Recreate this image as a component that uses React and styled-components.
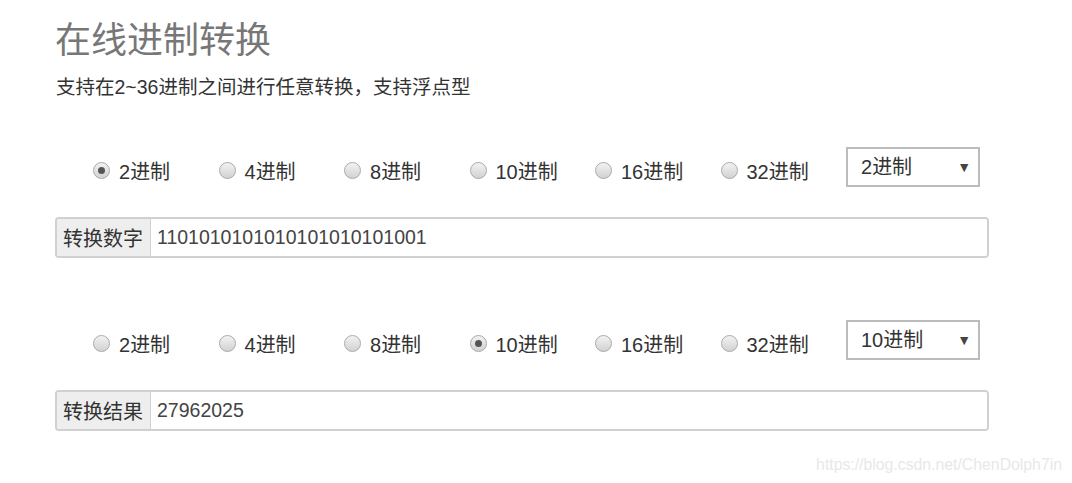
import React, { useState } from "react";
import styled, { createGlobalStyle } from "styled-components";

const GlobalStyle = createGlobalStyle`
  html, body {
    margin: 0;
    padding: 0;
    background: #fff;
  }
  body {
    font-family: "Liberation Sans", "Noto Sans CJK SC", sans-serif;
    color: #333;
  }
`;

const BASES = [2, 4, 8, 10, 16, 32];

// Styled components
const Page = styled.div`
  position: relative;
  width: 1072px;
  height: 483px;
  box-sizing: border-box;
  padding: 21px 0 0 55px;
  overflow: hidden;
`;

const Content = styled.div`
  width: 934px;
  display: flex;
  flex-direction: column;
`;

const Title = styled.h1`
  margin: 0;
  font-size: 36px;
  line-height: 40px;
  font-weight: 400;
  color: #777;
`;

const Subtitle = styled.p`
  margin: 12px 0 0 1px;
  font-size: 19.5px;
  line-height: 28px;
  color: #333;
`;

const Section = styled.div`
  display: flex;
  flex-direction: column;
  margin-top: ${({ $top }) => $top}px;
`;

const Row = styled.div`
  display: flex;
  align-items: center;
  height: 40px;
  padding-left: 38px;
`;

const RadioGroup = styled.div`
  display: grid;
  grid-template-columns: repeat(6, 125.5px);
  padding-top: 7px;
`;

const RadioItem = styled.label`
  display: flex;
  align-items: center;
  gap: 9px;
  font-size: 20px;
  color: #333;
  cursor: pointer;
`;

const RadioDot = styled.span`
  width: 17px;
  height: 17px;
  box-sizing: border-box;
  border-radius: 50%;
  border: 1px solid #a9a9a9;
  background: linear-gradient(#f2f2f2, #d2d2d2);
  display: flex;
  align-items: center;
  justify-content: center;

  &::after {
    content: "";
    width: 7px;
    height: 7px;
    border-radius: 50%;
    background: #555;
    display: ${({ $checked }) => ($checked ? "block" : "none")};
  }
`;

const Select = styled.div`
  width: 134px;
  height: 40px;
  box-sizing: border-box;
  border: 2px solid #bcbcbc;
  display: flex;
  align-items: center;
  justify-content: space-between;
  padding: 0 7px 3px 13px;
  font-size: 20px;
  color: #333;
  background: #fff;
`;

const Caret = styled.span`
  font-size: 14px;
  color: #444;
  padding-top: 2px;
`;

const InputGroup = styled.div`
  display: flex;
  height: 41px;
  box-sizing: border-box;
  margin-top: 30px;
  border: 2px solid #d0d0d0;
  border-radius: 4px;
  overflow: hidden;
`;

const Addon = styled.span`
  display: flex;
  align-items: center;
  padding: 0 6px;
  width: 94px;
  box-sizing: border-box;
  background: #eee;
  border-right: 1px solid #d0d0d0;
  font-size: 20px;
  color: #333;
`;

const Field = styled.input`
  flex: 1;
  border: none;
  outline: none;
  padding: 0 6px;
  font-family: inherit;
  font-size: 19.5px;
  color: #444;
  background: #fff;
`;

const Watermark = styled.span`
  position: absolute;
  right: 10px;
  bottom: 9px;
  font-size: 15.8px;
  color: #e8e8e8;
`;

const Converter = ({ top, base, label, value }) => {
  const [selected, setSelected] = useState(base);
  return (
    <Section $top={top}>
      <Row>
        <RadioGroup>
          {BASES.map((b) => (
            <RadioItem key={b} onClick={() => setSelected(b)}>
              <RadioDot $checked={selected === b} />
              {b}进制
            </RadioItem>
          ))}
        </RadioGroup>
        <Select>
          {selected}进制
          <Caret>▼</Caret>
        </Select>
      </Row>
      <InputGroup>
        <Addon>{label}</Addon>
        <Field defaultValue={value} />
      </InputGroup>
    </Section>
  );
};

const App = () => (
  <Page>
    <GlobalStyle />
    <Content>
      <Title>在线进制转换</Title>
      <Subtitle>支持在2~36进制之间进行任意转换，支持浮点型</Subtitle>
      <Converter
        top={46}
        base={2}
        label="转换数字"
        value="1101010101010101010101001"
      />
      <Converter top={62} base={10} label="转换结果" value="27962025" />
    </Content>
    <Watermark>https://blog.csdn.net/ChenDolph7in</Watermark>
  </Page>
);

export default App;
